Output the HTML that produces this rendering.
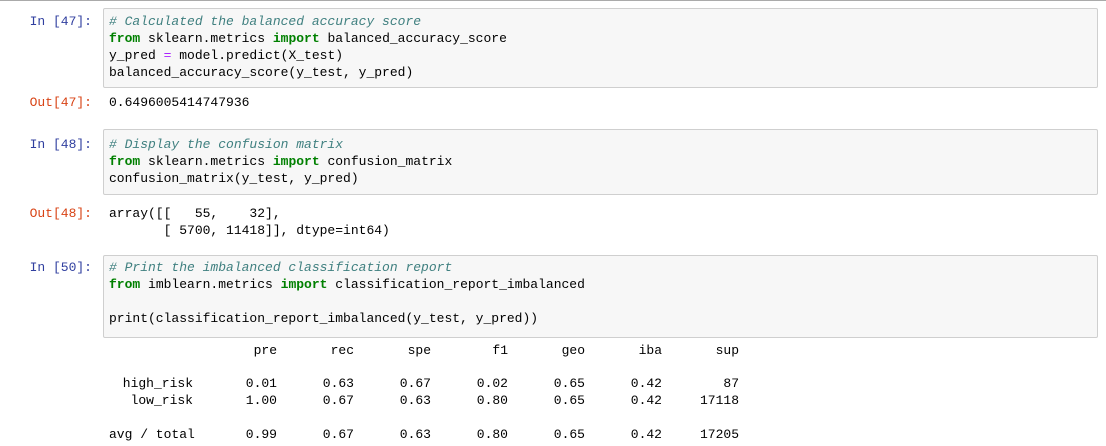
<!DOCTYPE html>
<html><head><style>
body{margin:0;width:1106px;height:446px;background:#fff;position:relative;overflow:hidden;font-family:"Liberation Mono",monospace;font-size:13px;}
.top{position:absolute;left:0;top:0;width:1106px;height:1px;background:#aaa}
.box{position:absolute;left:103px;width:993px;background:#f7f7f7;border:1px solid #cfcfcf;border-radius:2px}
.t{position:absolute;white-space:pre;line-height:17px;height:17px}
.in{color:#303F9F;right:1014px}
.out{color:#D84315;right:1014px}
.c{color:#408080;font-style:italic}
.k{color:#008000;font-weight:bold}
.o{color:#AA22FF}
.r{text-align:right}
</style></head><body>
<div class="top"></div>
<div class="box" style="top:8px;height:78px"></div>
<div class="t in" style="top:13px">In [47]:</div>
<div class="t" style="left:109px;top:13px"><span class="c"># Calculated the balanced accuracy score</span>
<span class="k">from</span> sklearn.metrics <span class="k">import</span> balanced_accuracy_score
y_pred <span class="o">=</span> model.predict(X_test)
balanced_accuracy_score(y_test, y_pred)</div>
<div class="t out" style="top:94px">Out[47]:</div>
<div class="t" style="left:109px;top:94px">0.6496005414747936</div>

<div class="box" style="top:129px;height:64px"></div>
<div class="t in" style="top:136px">In [48]:</div>
<div class="t" style="left:109px;top:136px"><span class="c"># Display the confusion matrix</span>
<span class="k">from</span> sklearn.metrics <span class="k">import</span> confusion_matrix
confusion_matrix(y_test, y_pred)</div>
<div class="t out" style="top:205px">Out[48]:</div>
<div class="t" style="left:109px;top:205px">array([[   55,    32],
       [ 5700, 11418]], dtype=int64)</div>

<div class="box" style="top:255px;height:81px"></div>
<div class="t in" style="top:259px">In [50]:</div>
<div class="t" style="left:109px;top:259px"><span class="c"># Print the imbalanced classification report</span>
<span class="k">from</span> imblearn.metrics <span class="k">import</span> classification_report_imbalanced

print(classification_report_imbalanced(y_test, y_pred))</div>

<div class="t r" style="right:829px;top:342px">pre</div>
<div class="t r" style="right:752px;top:342px">rec</div>
<div class="t r" style="right:675px;top:342px">spe</div>
<div class="t r" style="right:598px;top:342px">f1</div>
<div class="t r" style="right:521px;top:342px">geo</div>
<div class="t r" style="right:444px;top:342px">iba</div>
<div class="t r" style="right:367px;top:342px">sup</div>

<div class="t r" style="right:913px;top:375px">high_risk
low_risk</div>
<div class="t r" style="right:829px;top:375px">0.01
1.00</div>
<div class="t r" style="right:752px;top:375px">0.63
0.67</div>
<div class="t r" style="right:675px;top:375px">0.67
0.63</div>
<div class="t r" style="right:598px;top:375px">0.02
0.80</div>
<div class="t r" style="right:521px;top:375px">0.65
0.65</div>
<div class="t r" style="right:444px;top:375px">0.42
0.42</div>
<div class="t r" style="right:367px;top:375px">87
17118</div>

<div class="t" style="left:109px;top:426px">avg / total</div>
<div class="t r" style="right:829px;top:426px">0.99</div>
<div class="t r" style="right:752px;top:426px">0.67</div>
<div class="t r" style="right:675px;top:426px">0.63</div>
<div class="t r" style="right:598px;top:426px">0.80</div>
<div class="t r" style="right:521px;top:426px">0.65</div>
<div class="t r" style="right:444px;top:426px">0.42</div>
<div class="t r" style="right:367px;top:426px">17205</div>
</body></html>
